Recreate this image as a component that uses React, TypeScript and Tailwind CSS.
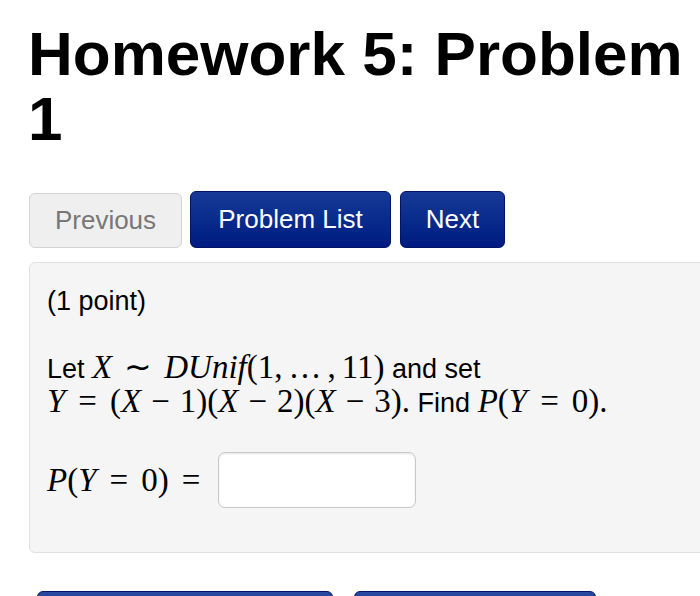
import React from 'react';

function V({ children }: { children: React.ReactNode }) {
  return <span className="italic">{children}</span>;
}

function Op({ children, w = 'mx-[10px]' }: { children: React.ReactNode; w?: string }) {
  return <span className={w}>{children}</span>;
}

function Math({ children }: { children: React.ReactNode }) {
  return (
    <span className="font-['Liberation_Serif',_'Times_New_Roman',_serif] text-[33px] leading-[20px]">{children}</span>
  );
}

export default function App() {
  return (
    <div className="h-[596px] w-[700px] overflow-hidden bg-white text-black font-['Liberation_Sans',_Arial,_sans-serif]">
      <div className="pl-[29px] pt-[21px]">
        {/* Title */}
        <h1 className="w-[671px] text-[62px] font-bold leading-[65px] -ml-[1px]">Homework 5: Problem 1</h1>

        {/* Nav buttons */}
        <div className="mt-[40px] flex items-end gap-2">
          <button className="h-[55px] w-[153px] rounded-[6px] border border-[#d4d4d4] bg-[#efefef] text-[26px] text-[#777]">
            Previous
          </button>
          <button className="h-[57px] w-[201px] rounded-[6px] border border-[#001466] bg-gradient-to-b from-[#173a98] to-[#001a80] text-[26px] text-white">
            Problem List
          </button>
          <button className="ml-[1px] h-[57px] w-[105px] rounded-[6px] border border-[#001466] bg-gradient-to-b from-[#173a98] to-[#001a80] text-[26px] text-white">
            Next
          </button>
        </div>

        {/* Problem panel */}
        <div className="mt-[14px] w-[720px] rounded-[6px] border border-[#e1e1e1] bg-[#f5f5f5] pb-[44px] pl-[17px] pt-[21px]">
          <p className="text-[27px] leading-[34px]">(1 point)</p>
          <div className="mt-[34px] text-[27px] leading-[34px]">
            <div>
              Let{' '}
              <Math>
                <V>X</V>
                <Op w="mx-[12px]">∼</Op>
                <V>DUnif</V>(1,<span className="mx-[6px]">…</span>,<span className="ml-[6px]">11)</span>
              </Math>{' '}
              and set
            </div>
            <div>
              <Math>
                <V>Y</V>
                <Op w="mx-[13px]">=</Op>(<V>X</V>
                <Op>−</Op>1)(<V>X</V>
                <Op>−</Op>2)(<V>X</V>
                <Op>−</Op>3).
              </Math>{' '}
              Find{' '}
              <Math>
                <V>P</V>(<V>Y</V>
                <Op w="mx-[13px]">=</Op>0).
              </Math>
            </div>
          </div>

          <div className="mt-[32px] flex items-center">
            <Math>
              <V>P</V>(<V>Y</V>
              <Op w="mx-[13px]">=</Op>0)
              <Op w="ml-[13px]">=</Op>
            </Math>
            <input
              type="text"
              className="ml-[18px] h-[56px] w-[198px] rounded-[7px] border border-[#c8c8c8] bg-white shadow-[inset_0_1px_2px_rgba(0,0,0,0.1)] outline-none"
            />
          </div>
        </div>

        {/* Bottom buttons (cut off) */}
        <div className="mt-[38px] flex gap-[21px] pl-[8px]">
          <div className="h-[40px] w-[296px] rounded-t-[6px] border border-[#001466] bg-gradient-to-b from-[#2a4aa0] to-[#001a80]" />
          <div className="h-[40px] w-[242px] rounded-t-[6px] border border-[#001466] bg-gradient-to-b from-[#2a4aa0] to-[#001a80]" />
        </div>
      </div>
    </div>
  );
}
